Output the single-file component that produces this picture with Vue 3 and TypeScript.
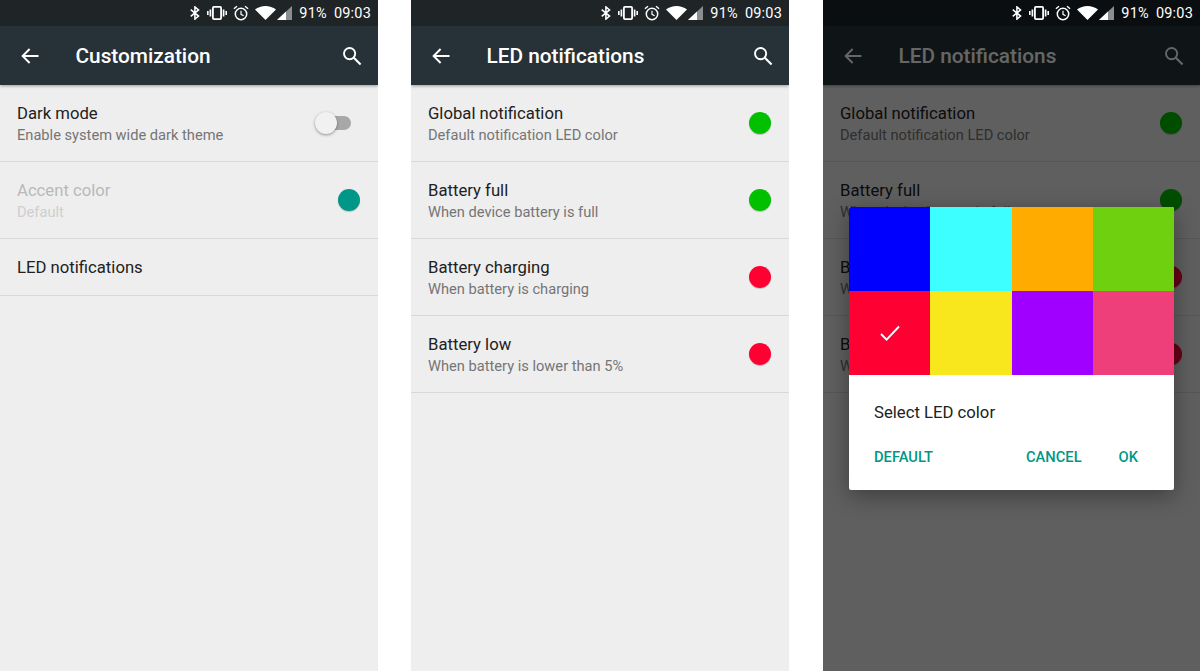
<script setup lang="ts">
interface Row { title: string; sub?: string; color?: string; toggle?: boolean; disabled?: boolean }
interface Screen { title: string; rows: Row[]; dim?: boolean }

const green = '#00c000'
const red = '#ff0033'
const ledRows: Row[] = [
  { title: 'Global notification', sub: 'Default notification LED color', color: green },
  { title: 'Battery full', sub: 'When device battery is full', color: green },
  { title: 'Battery charging', sub: 'When battery is charging', color: red },
  { title: 'Battery low', sub: 'When battery is lower than 5%', color: red },
]
const screens: Screen[] = [
  {
    title: 'Customization',
    rows: [
      { title: 'Dark mode', sub: 'Enable system wide dark theme', toggle: true },
      { title: 'Accent color', sub: 'Default', color: '#009688', disabled: true },
      { title: 'LED notifications' },
    ],
  },
  { title: 'LED notifications', rows: ledRows },
  { title: 'LED notifications', rows: ledRows, dim: true },
]
const swatches = ['#0000ff', '#3dffff', '#ffab00', '#6fd00f', '#ff0033', '#f8e71c', '#a000ff', '#ee3f7b']
</script>

<template>
  <div class="page">
    <section v-for="(s, i) in screens" :key="i" class="phone" :class="{ dim: s.dim }">
      <div class="status">
        <svg class="ic bt" viewBox="0 0 11 15" width="10" height="14">
          <path d="M.8 3.8 9.4 10.9 5.4 14.2V.8L9.4 4.1.8 11.2" fill="none" stroke="#fff" stroke-width="1.7" />
        </svg>
        <svg class="ic vib" viewBox="0 0 20 14" width="20" height="14">
          <rect x="5.9" y=".9" width="8.2" height="12.2" rx="1" fill="none" stroke="#fff" stroke-width="1.8" />
          <path d="M3.4 3.5v7M16.6 3.5v7" stroke="#fff" stroke-width="1.7" />
          <path d="M.8 5v4M19.2 5v4" stroke="#fff" stroke-width="1.6" />
        </svg>
        <svg class="ic alarm" viewBox="0 0 16 16" width="16" height="16">
          <circle cx="8" cy="9" r="5.7" fill="none" stroke="#fff" stroke-width="1.5" />
          <path d="M8 5.8V9.3L10.6 10.8" fill="none" stroke="#fff" stroke-width="1.2" />
          <path d="M.9 3.8 4 1.2M15.1 3.8 12 1.2" stroke="#fff" stroke-width="1.4" />
        </svg>
        <svg class="ic wifi" viewBox="0 0 21 14" width="21" height="14">
          <path d="M0 3.6C5.8-1.1 15.2-1.1 21 3.6L10.5 14Z" fill="#fff" />
        </svg>
        <svg class="ic signal" viewBox="0 0 15 14" width="15" height="14">
          <path d="M15 0V14H0Z" fill="#8a8e90" />
          <path d="M9 5.6V14H0Z" fill="#fff" />
        </svg>
        <span class="battery">91%</span>
        <span class="clock">09:03</span>
      </div>
      <header class="toolbar">
        <svg class="back" viewBox="0 0 18 16" width="18" height="16">
          <path d="M17.5 8H1.8M8.6 1 1.6 8l7 7" fill="none" stroke="currentColor" stroke-width="1.9" />
        </svg>
        <h1 class="title">{{ s.title }}</h1>
        <svg class="search" viewBox="0 0 20 20" width="20" height="20">
          <circle cx="7.6" cy="7.6" r="5.6" fill="none" stroke="currentColor" stroke-width="1.9" />
          <path d="M11.8 11.8 18.6 18.6" stroke="currentColor" stroke-width="2.1" />
        </svg>
      </header>
      <ul class="list">
        <li v-for="r in s.rows" :key="r.title" class="row" :class="{ disabled: r.disabled, single: !r.sub }">
          <div class="text">
            <div class="row-title">{{ r.title }}</div>
            <div v-if="r.sub" class="row-sub">{{ r.sub }}</div>
          </div>
          <span v-if="r.color" class="dot" :style="{ backgroundColor: r.color }"></span>
          <span v-if="r.toggle" class="switch"><span class="track"></span><span class="thumb"></span></span>
        </li>
      </ul>
      <div v-if="s.dim" class="scrim"></div>
      <div v-if="s.dim" class="dialog">
        <div class="grid">
          <div v-for="(c, n) in swatches" :key="n" class="swatch" :style="{ backgroundColor: c }">
            <svg v-if="n === 4" viewBox="0 0 20 16" width="20" height="16">
              <path d="M1 9 6.6 14.6 19 1.5" fill="none" stroke="#fff" stroke-width="1.9" />
            </svg>
          </div>
        </div>
        <div class="dlg-title">Select LED color</div>
        <div class="actions">
          <span class="act">DEFAULT</span>
          <span class="act cancel">CANCEL</span>
          <span class="act ok">OK</span>
        </div>
      </div>
    </section>
  </div>
</template>

<style>
html, body { margin: 0; background: #fff; }
</style>

<style scoped>
.page {
  width: 1200px;
  height: 671px;
  display: flex;
  gap: 33px;
  overflow: hidden;
  font-family: Roboto, "Liberation Sans", sans-serif;
  background: #fff;
}
.phone {
  position: relative;
  width: 378px;
  flex: none;
  height: 671px;
  background: #eeeeee;
  display: flex;
  flex-direction: column;
  overflow: hidden;
}
.phone.dim { width: 377px; margin-left: 1px; }
.status {
  position: relative;
  z-index: 3;
  height: 26px;
  flex: none;
  background: #1f2427;
  color: #fff;
  display: flex;
  align-items: center;
  justify-content: flex-end;
  padding-right: 7px;
  box-sizing: border-box;
  font-size: 14.5px;
  letter-spacing: 0.2px;
}
.dim .status { background: #0b0e10; }
.ic { flex: none; display: block; }
.vib { margin-left: 7px; }
.alarm { margin-left: 6px; }
.wifi { margin-left: 6px; }
.signal { margin-left: 1px; }
.battery { margin-left: 7px; }
.clock { margin-left: 7px; }
.toolbar {
  position: relative;
  z-index: 1;
  height: 59px;
  flex: none;
  background: #263238;
  color: #fff;
  display: flex;
  align-items: center;
  box-shadow: 0 1px 3px rgba(0, 0, 0, 0.35);
}
.back { margin-left: 21px; flex: none; }
.title {
  margin: 0 0 0 36.5px;
  flex: 1;
  font-size: 20.8px;
  font-weight: 500;
  line-height: 28px;
}
.search { margin-right: 16px; flex: none; }
.list { list-style: none; margin: 0; padding: 0; }
.row {
  height: 77px;
  box-sizing: border-box;
  border-bottom: 1px solid #d8d8d8;
  display: flex;
  align-items: center;
  padding: 0 18px 1px 17px;
}
.row.single { height: 57px; padding-top: 1px; padding-bottom: 0; }
.text { flex: 1; min-width: 0; }
.row:not(.single) .text { padding-top: 3px; }
.row-title {
  font-size: 16.7px;
  line-height: 22px;
  color: #212121;
}
.row-sub {
  font-size: 14.65px;
  line-height: 20px;
  color: #757575;
}
.disabled .row-title { color: #b9b9b9; }
.disabled .row-sub { color: #cfcfcf; }
.dot {
  width: 22px;
  height: 22px;
  border-radius: 50%;
  flex: none;
  box-shadow: 0 1px 1px rgba(0, 0, 0, 0.2);
}
.switch {
  position: relative;
  width: 38px;
  height: 22px;
  margin-right: 7px;
  flex: none;
}
.track {
  position: absolute;
  left: 3px;
  top: 4px;
  width: 33px;
  height: 14px;
  border-radius: 7px;
  background: #a8a8a8;
}
.thumb {
  position: absolute;
  left: 0;
  top: 0;
  width: 22px;
  height: 22px;
  border-radius: 50%;
  background: #f1f1f1;
  box-shadow: 0 1px 3px rgba(0, 0, 0, 0.4);
}
.scrim {
  position: absolute;
  z-index: 2;
  inset: 26px 0 0 0;
  background: rgba(0, 0, 0, 0.6);
}
.dialog {
  position: absolute;
  z-index: 4;
  left: 26px;
  top: 207px;
  width: 325px;
  height: 283px;
  background: #fff;
  border-radius: 2px;
  overflow: hidden;
  box-shadow: 0 6px 22px rgba(0, 0, 0, 0.35);
}
.grid {
  display: grid;
  grid-template-columns: repeat(4, 1fr);
  grid-auto-rows: 84px;
}
.swatch { display: flex; align-items: center; justify-content: center; }
.dlg-title {
  margin: 27px 0 0 25px;
  font-size: 16.7px;
  line-height: 22px;
  color: #212121;
}
.actions {
  display: flex;
  align-items: center;
  margin-top: 23px;
  padding: 0 36px 0 25px;
}
.act {
  font-size: 14.7px;
  font-weight: 500;
  line-height: 20px;
  color: #009688;
}
.cancel { margin-left: auto; }
.ok { margin-left: 37px; }
</style>
